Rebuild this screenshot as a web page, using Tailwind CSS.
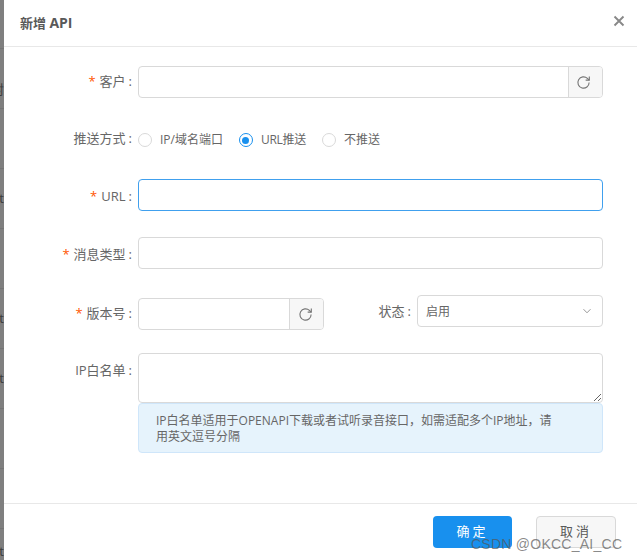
<!DOCTYPE html>
<html lang="zh">

<head>
  <meta charset="UTF-8">
  <title>新增 API</title>
  <script src="https://cdn.jsdelivr.net/npm/@tailwindcss/browser@4"></script>
</head>

<body class="w-[637px] h-[560px] overflow-hidden bg-white font-['Open_Sans','Noto_Sans_CJK_SC',sans-serif] text-[12px] text-[#666]">
  <div class="relative flex h-[560px]">
    <!-- page behind the modal -->
    <div class="w-1 shrink-0 overflow-hidden bg-[#7f7f7f] text-[13px] text-[#3c3c3c]">
      <div class="h-[49px] border-b border-[#757575]"></div>
      <div class="h-[60px] border-b border-[#757575] flex items-center justify-end pt-[22px]">封</div>
      <div class="h-[60px] border-b border-[#757575]"></div>
      <div class="h-[60px] border-b border-[#757575] flex items-center justify-end">it</div>
      <div class="h-[60px] border-b border-[#757575]"></div>
      <div class="h-[60px] border-b border-[#757575] flex items-center justify-end">it</div>
      <div class="h-[60px] border-b border-[#757575] flex items-center justify-end">it</div>
      <div class="h-[60px] border-b border-[#757575]"></div>
      <div class="h-[60px] border-b border-[#757575]"></div>
      <div class="h-8 flex items-end justify-end">it</div>
    </div>

    <!-- modal -->
    <div class="flex-1 flex flex-col">
      <div class="h-[47px] shrink-0 flex items-center justify-between border-b border-[#e8e8e8] pl-4 pr-3">
        <h2 class="text-[13px] font-bold text-[#595959]">新增 <span class="text-[14px]">API</span></h2>
        <svg class="w-3 h-3 mb-1" viewBox="0 0 12 12" fill="none" stroke="#888" stroke-width="1.9"><path d="M1.5 1.5l9 9M10.5 1.5l-9 9" /></svg>
      </div>

      <form class="flex-1 flex flex-col pt-[19px] pl-[55px] pr-[34px]">
        <!-- 客户 -->
        <div class="flex items-center h-8">
          <label class="w-[79px] shrink-0 pr-[6px] text-right text-[13px]"><span class="text-[#ff5500] mr-1">*</span>客户<span class="ml-[3px]">:</span></label>
          <div class="flex-1 h-8 flex border border-[#d9d9d9] rounded-[4px] overflow-hidden">
            <input type="text" class="flex-1 min-w-0 outline-none">
            <span class="w-[34px] flex items-center justify-center border-l border-[#d9d9d9] bg-[#f7f7f7] pr-[5px]">
              <svg class="w-[15px] h-[15px]" viewBox="0 0 16 16" fill="none" stroke="#777" stroke-width="1.2"><path d="M14 8a6 6 0 1 1-1.8-4.3L14 5.4" /><path d="M14.2 1.6v3.9h-3.9" /></svg>
            </span>
          </div>
        </div>

        <!-- 推送方式 -->
        <div class="flex items-center h-5 mt-[32px]">
          <label class="w-[79px] shrink-0 pr-[6px] pb-[2px] text-right text-[13px]">推送方式<span class="ml-[3px]">:</span></label>
          <div class="flex items-center">
            <span class="w-[14px] h-[14px] rounded-full border border-[#d9d9d9]"></span>
            <span class="ml-2 mr-4">IP/域名端口</span>
            <span class="w-[14px] h-[14px] rounded-full border border-[#1890ee] flex items-center justify-center"><span class="w-[7px] h-[7px] rounded-full bg-[#1890ee]"></span></span>
            <span class="ml-2 mr-4 tracking-[-0.3px]">URL推送</span>
            <span class="w-[14px] h-[14px] rounded-full border border-[#d9d9d9]"></span>
            <span class="ml-2">不推送</span>
          </div>
        </div>

        <!-- URL -->
        <div class="flex items-center h-8 mt-[29px]">
          <label class="w-[79px] shrink-0 pr-[6px] pt-1 text-right text-[13px]"><span class="text-[#ff5500] mr-1">*</span>URL<span class="ml-[3px]">:</span></label>
          <input type="text" class="flex-1 h-8 border border-[#40a0ee] rounded-[4px] outline-none">
        </div>

        <!-- 消息类型 -->
        <div class="flex items-center h-8 mt-[26px]">
          <label class="w-[79px] shrink-0 pr-[6px] pt-1 text-right text-[13px]"><span class="text-[#ff5500] mr-1">*</span>消息类型<span class="ml-[3px]">:</span></label>
          <input type="text" class="flex-1 h-8 border border-[#d9d9d9] rounded-[4px] outline-none">
        </div>

        <!-- 版本号 / 状态 -->
        <div class="flex items-start h-[35px] mt-[26px]">
          <div class="flex items-center h-8 mt-[3px]">
            <label class="w-[79px] shrink-0 pr-[6px] text-right text-[13px]"><span class="text-[#ff5500] mr-1">*</span>版本号<span class="ml-[3px]">:</span></label>
            <div class="w-[186px] h-8 flex border border-[#d9d9d9] rounded-[4px] overflow-hidden">
              <input type="text" class="flex-1 min-w-0 outline-none">
              <span class="w-[34px] flex items-center justify-center border-l border-[#d9d9d9] bg-[#f7f7f7] pr-[2px]">
                <svg class="w-[15px] h-[15px]" viewBox="0 0 16 16" fill="none" stroke="#777" stroke-width="1.2"><path d="M14 8a6 6 0 1 1-1.8-4.3L14 5.4" /><path d="M14.2 1.6v3.9h-3.9" /></svg>
              </span>
            </div>
          </div>
          <div class="flex items-center h-8 ml-auto">
            <label class="pr-[6px] pt-[2px] text-right text-[13px]">状态<span class="ml-[3px]">:</span></label>
            <div class="w-[186px] h-8 flex items-center justify-between border border-[#d9d9d9] rounded-[4px] pl-2 pr-[10px]">
              <span class="pt-[2px]">启用</span>
              <svg class="w-[10px] h-[10px]" viewBox="0 0 10 10" fill="none" stroke="#999" stroke-width="1"><path d="M1.5 3.2L5 6.8l3.5-3.6" /></svg>
            </div>
          </div>
        </div>

        <!-- IP白名单 -->
        <div class="flex items-start mt-[23px]">
          <label class="w-[79px] shrink-0 pr-[6px] text-right pt-2 text-[13px]">IP白名单<span class="ml-[3px]">:</span></label>
          <div class="flex-1">
            <textarea class="block w-full h-[50px] border border-[#d9d9d9] rounded-[4px] outline-none"></textarea>
            <div class="h-[50px] border border-[#cfe6fa] rounded-[4px] bg-[#e6f3fc] pl-[17px] pr-[48px] pt-[2px] leading-4 text-[#666] flex items-center">
              <p>IP白名单适用于OPENAPI下载或者试听录音接口，如需适配多个IP地址，请用英文逗号分隔</p>
            </div>
          </div>
        </div>
      </form>

      <div class="h-[57px] shrink-0 flex items-start justify-end gap-6 border-t border-[#e8e8e8] pt-3 pr-[21px]">
        <button class="w-[79px] h-8 rounded-[4px] bg-[#1890ee] text-white text-[13px] tracking-[3px]">确定</button>
        <button class="w-20 h-8 rounded-[4px] border border-[#d9d9d9] bg-[#f7f7f7] text-[#595959] text-[13px] tracking-[3px]">取消</button>
      </div>
    </div>

    <!-- watermark over the footer -->
    <div class="absolute left-[471px] top-[534px] font-['Liberation_Sans',sans-serif] text-[14px] tracking-[0.25px] text-[#555]/70">CSDN @OKCC_AI_CC</div>
  </div>
</body>

</html>
